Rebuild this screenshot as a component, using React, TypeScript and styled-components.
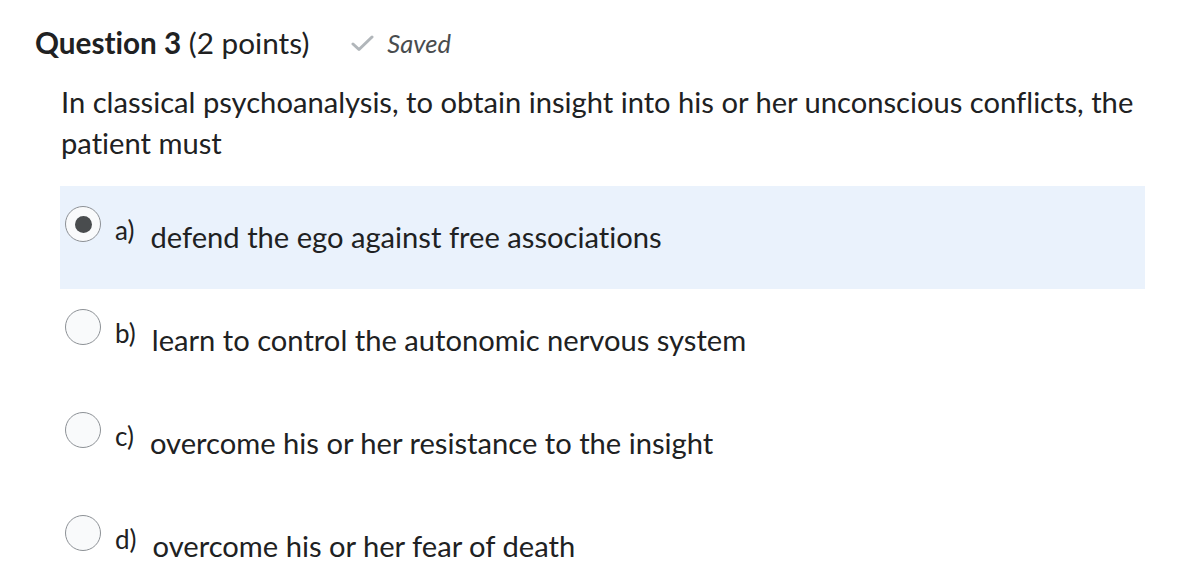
import React from "react";
import styled, { createGlobalStyle } from "styled-components";

const Global = createGlobalStyle`
  html, body { margin: 0; padding: 0; background: #fff; }
  body {
    font-family: Lato, "Noto Sans", sans-serif;
    color: #202122;
    font-variant-ligatures: none;
    font-feature-settings: "liga" 0;
  }
`;

const Page = styled.div`
  width: 1200px;
  height: 570px;
  overflow: hidden;
  box-sizing: border-box;
  padding: 24px 55px 0 35px;
`;

const Header = styled.div`
  display: flex;
  align-items: center;
  gap: 42px;
  height: 38px;
`;

const Title = styled.h2`
  margin: 0;
  font-size: 29.7px;
  font-weight: 400;
  color: #202122;
  line-height: 1.2;
  strong { font-weight: 700; }
`;

const SavedStatus = styled.span`
  display: inline-flex;
  align-items: center;
  gap: 13px;
  font-size: 25.5px;
  font-style: italic;
  color: #494c4e;
`;

const Body = styled.div`
  padding-left: 25px;
  margin-top: 19px;
`;

const Prompt = styled.p`
  margin: 0 0 23px 1px;
  font-size: 29.15px;
  line-height: 41px;
  color: #202122;
`;

const Options = styled.div`
  display: flex;
  flex-direction: column;
`;

const Row = styled.label<{ $selected?: boolean }>`
  display: flex;
  align-items: flex-start;
  box-sizing: border-box;
  height: 103px;
  padding: 20px 5px;
  background: ${(p) => (p.$selected ? "#eaf2fc" : "transparent")};
  cursor: pointer;
`;

const Radio = styled.span<{ $checked?: boolean }>`
  flex: none;
  width: 36px;
  height: 36px;
  box-sizing: border-box;
  border-radius: 50%;
  border: 1.5px solid #8d9196;
  background: #f9fafb;
  display: flex;
  align-items: center;
  justify-content: center;
  &::after {
    content: "";
    display: ${(p) => (p.$checked ? "block" : "none")};
    width: 17px;
    height: 17px;
    border-radius: 50%;
    background: #494c4e;
  }
`;

const Letter = styled.span`
  margin: 9px 0 0 14px;
  font-size: 26px;
  line-height: 1.2;
  color: #202122;
`;

const AnswerText = styled.span`
  margin: 13px 0 0 16px;
  font-size: 29.15px;
  line-height: 1.2;
  color: #202122;
`;

const Check = () => (
  <svg width="23" height="17" viewBox="0 0 23 17" fill="none">
    <path d="M2 9 L8 14.5 L21 2" stroke="#b1b6ba" strokeWidth="3" strokeLinecap="round" strokeLinejoin="round" />
  </svg>
);

const options = [
  { letter: "a)", text: "defend the ego against free associations" },
  { letter: "b)", text: "learn to control the autonomic nervous system" },
  { letter: "c)", text: "overcome his or her resistance to the insight" },
  { letter: "d)", text: "overcome his or her fear of death" },
];

export default function App() {
  const selected = 0;
  return (
    <>
      <Global />
      <Page>
        <Header>
          <Title>
            <strong>Question 3</strong> (2 points)
          </Title>
          <SavedStatus>
            <Check />
            Saved
          </SavedStatus>
        </Header>
        <Body>
          <Prompt>
            In classical psychoanalysis, to obtain insight into his or her unconscious conflicts, the patient must
          </Prompt>
          <Options>
            {options.map((o, i) => (
              <Row key={o.letter} $selected={i === selected}>
                <Radio $checked={i === selected} />
                <Letter>{o.letter}</Letter>
                <AnswerText>{o.text}</AnswerText>
              </Row>
            ))}
          </Options>
        </Body>
      </Page>
    </>
  );
}
